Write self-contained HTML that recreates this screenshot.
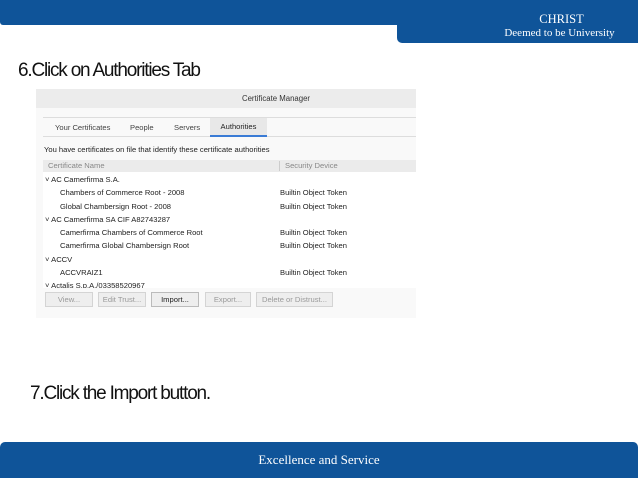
<!DOCTYPE html>
<html><head><style>
*{margin:0;padding:0;box-sizing:border-box}
body{width:638px;height:478px;position:relative;background:#fff;overflow:hidden;font-family:"Liberation Sans",sans-serif}
.top{position:absolute;left:0;top:0;width:638px;height:25px;background:#0f5499;border-bottom-left-radius:3px;border-bottom-right-radius:3px}
.badge{position:absolute;left:397px;top:0;width:241px;height:43px;background:#0f5499;border-bottom-left-radius:5px;color:#fff;font-family:"Liberation Serif",serif;text-align:center}
.badge .a{font-size:12.5px;position:absolute;top:12px;left:88px;right:0;text-align:center}
.badge .b{font-size:11px;position:absolute;top:27px;left:84px;right:0;text-align:center}
.h{position:absolute;font-size:19px;letter-spacing:-1.2px;color:#111}
.foot{position:absolute;left:0;top:442px;width:638px;height:36px;background:#0f5499;border-top-left-radius:5px;border-top-right-radius:5px;color:#fff;font-family:"Liberation Serif",serif;font-size:13px;text-align:center;padding-top:10px}
.win{position:absolute;left:36px;top:89px;width:380px;height:229px;background:#f9f9f9;font-size:7.6px;color:#222}
.tb{position:absolute;left:0;top:0;width:380px;height:19px;background:#ececec;text-align:center;line-height:19px;color:#333;font-size:7.8px;padding-left:100px}
.tabs{position:absolute;left:7px;top:28px;width:373px;height:20px;border-top:1px solid #ddd;border-bottom:1px solid #ddd}
.tab{position:absolute;top:5px;color:#444}
.auth{position:absolute;left:167px;top:0;width:57px;height:19px;background:#e8e8e8;border-bottom:2px solid #3a7bd5;text-align:center;line-height:18px}
.t{position:absolute;white-space:nowrap}
.list{position:absolute;left:7px;top:71px;width:373px;height:128px;background:#fff;overflow:hidden}
.hd{position:absolute;left:0;top:0;width:373px;height:12px;background:#ebebeb;color:#888;line-height:12px}
.btn{position:absolute;top:203px;height:15px;border:1px solid #d4d4d4;background:#eeeeee;color:#999;text-align:center;line-height:13px}
</style></head><body>
<div class="top"></div>
<div class="badge"><div class="a">CHRIST</div><div class="b">Deemed to be University</div></div>
<div class="h" style="left:18px;top:60px">6.Click on Authorities Tab</div>
<div class="win">
<div class="tb">Certificate Manager</div>
<div class="tabs">
<span class="tab" style="left:12px">Your Certificates</span>
<span class="tab" style="left:87px">People</span>
<span class="tab" style="left:131px">Servers</span>
<div class="auth">Authorities</div>
</div>
<div class="t" style="left:8px;top:56px">You have certificates on file that identify these certificate authorities</div>
<div class="list">
<div class="hd"><span class="t" style="left:5px">Certificate Name</span><span style="position:absolute;left:236px;top:1px;height:10px;border-left:1px solid #ccc"></span><span class="t" style="left:242px">Security Device</span></div>
<div class="t" style="left:2px;top:15px">˅ AC Camerfirma S.A.</div>
<div class="t" style="left:17px;top:28px">Chambers of Commerce Root - 2008</div><div class="t" style="left:237px;top:28px">Builtin Object Token</div>
<div class="t" style="left:17px;top:42px">Global Chambersign Root - 2008</div><div class="t" style="left:237px;top:42px">Builtin Object Token</div>
<div class="t" style="left:2px;top:55px">˅ AC Camerfirma SA CIF A82743287</div>
<div class="t" style="left:17px;top:68px">Camerfirma Chambers of Commerce Root</div><div class="t" style="left:237px;top:68px">Builtin Object Token</div>
<div class="t" style="left:17px;top:81px">Camerfirma Global Chambersign Root</div><div class="t" style="left:237px;top:81px">Builtin Object Token</div>
<div class="t" style="left:2px;top:95px">˅ ACCV</div>
<div class="t" style="left:17px;top:108px">ACCVRAIZ1</div><div class="t" style="left:237px;top:108px">Builtin Object Token</div>
<div class="t" style="left:2px;top:121px">˅ Actalis S.p.A./03358520967</div>
</div>
<div class="btn" style="left:9px;width:48px">View...</div>
<div class="btn" style="left:62px;width:48px">Edit Trust...</div>
<div class="btn" style="left:115px;width:48px;color:#222;border-color:#bbb">Import...</div>
<div class="btn" style="left:169px;width:46px">Export...</div>
<div class="btn" style="left:220px;width:77px">Delete or Distrust...</div>
</div>
<div class="h" style="left:30px;top:383px">7.Click the Import button.</div>
<div class="foot">Excellence and Service</div>
</body></html>
